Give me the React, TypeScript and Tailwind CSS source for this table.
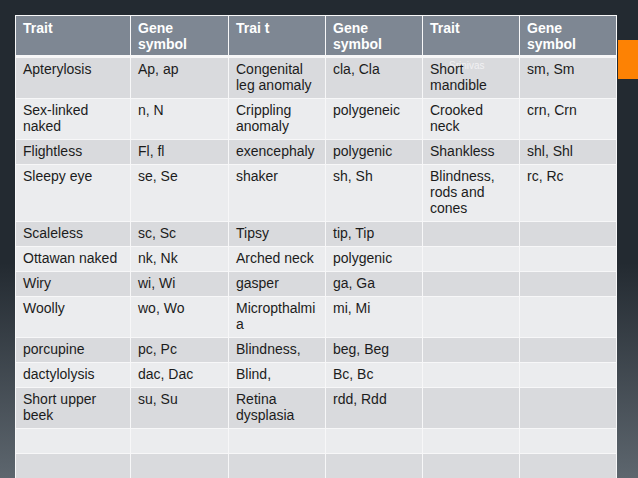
import type React from 'react'

// Slide: gene symbols for traits table
const rows: string[][] = [
  ['Apterylosis', 'Ap, ap', 'Congenital leg anomaly', 'cla, Cla', 'Short mandible', 'sm, Sm'],
  ['Sex-linked naked', 'n, N', 'Crippling anomaly', 'polygeneic', 'Crooked neck', 'crn, Crn'],
  ['Flightless', 'Fl, fl', 'exencephaly', 'polygenic', 'Shankless', 'shl, Shl'],
  ['Sleepy eye', 'se, Se', 'shaker', 'sh, Sh', 'Blindness, rods and cones', 'rc, Rc'],
  ['Scaleless', 'sc, Sc', 'Tipsy', 'tip, Tip', '', ''],
  ['Ottawan naked', 'nk, Nk', 'Arched neck', 'polygenic', '', ''],
  ['Wiry', 'wi, Wi', 'gasper', 'ga, Ga', '', ''],
  ['Woolly', 'wo, Wo', 'Micropthalmia', 'mi, Mi', '', ''],
  ['porcupine', 'pc, Pc', 'Blindness,', 'beg, Beg', '', ''],
  ['dactylolysis', 'dac, Dac', 'Blind,', 'Bc, Bc', '', ''],
  ['Short upper beek', 'su, Su', 'Retina dysplasia', 'rdd, Rdd', '', ''],
  ['', '', '', '', '', ''],
  ['', '', '', '', '', '']
]

const headers = ['Trait', 'Gene symbol', 'Trai t', 'Gene symbol', 'Trait', 'Gene symbol']
const widths = ['w-[115px]', 'w-[98px]', 'w-[97px]', 'w-[97px]', 'w-[97px]', 'w-[97px]']

const Cell = ({ text, watermark }: { text: string; watermark?: boolean }): React.ReactNode => (
  <td className="relative border border-[#f7f7f8] pl-[7px] pr-[6px] pt-[3px] pb-[5px] align-top break-words [overflow-wrap:anywhere]">
    {watermark && (
      <span className="absolute left-[26px] top-[2px] text-[10px] leading-[12px] text-[#f1f1f3]">Srinivas</span>
    )}
    <span className="relative">{text || '\u00a0'}</span>
  </td>
)

export default function App() {
  return (
    <div
      className="w-[638px] h-[478px] overflow-hidden flex bg-[linear-gradient(to_bottom,#232a31_0%,#232a31_55%,#5d666e_100%)]"
      style={{ fontFamily: '"Liberation Sans", Arial, sans-serif' }}
    >
      <div className="pl-[15px] pt-[15px]">
        <table className="table-fixed border-collapse w-[601px] text-[14px] leading-[16px] text-[#1c1c1c]">
          <thead>
            <tr className="bg-[#7e8793]">
              {headers.map((h, i) => (
                <th
                  key={i}
                  className={`${widths[i]} border border-[#f7f7f8] border-b-[3px] pl-[7px] pr-[6px] pt-[4px] pb-[3px] text-left align-top font-bold text-white`}
                >
                  {h}
                </th>
              ))}
            </tr>
          </thead>
          <tbody>
            {rows.map((r, ri) => (
              <tr key={ri} className={ri % 2 === 0 ? 'bg-[#d9dadd]' : 'bg-[#ebecee]'}>
                {r.map((c, ci) => (
                  <Cell key={ci} text={c} watermark={ri === 0 && ci === 4} />
                ))}
              </tr>
            ))}
          </tbody>
        </table>
      </div>
      <div className="mt-[40px] ml-[1px] w-[21px] h-[39px] bg-[#fd8204]" />
    </div>
  )
}
